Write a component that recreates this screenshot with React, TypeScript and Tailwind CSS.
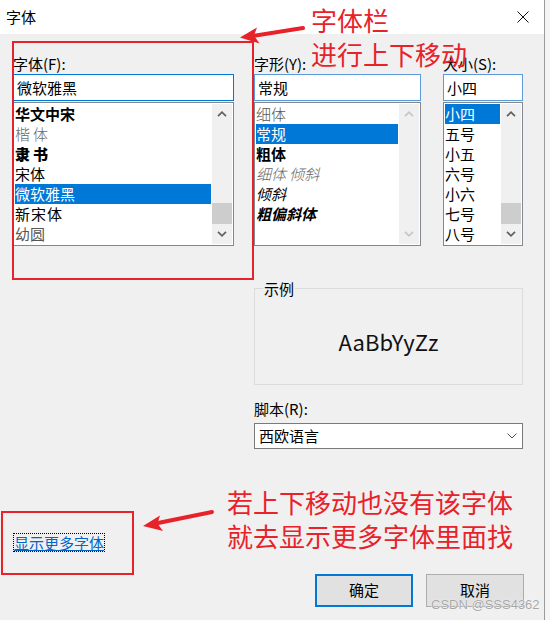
import React from "react";

const sans = "font-['Noto_Sans_CJK_SC','Noto_Sans',sans-serif]";

type Item = { label: string; cls?: string; selected?: boolean };

function Chevron({ dir, color }: { dir: "up" | "down"; color: string }) {
  return (
    <svg width="10" height="6" viewBox="0 0 10 6">
      <path
        d={dir === "up" ? "M1 5.2 L5 1.2 L9 5.2" : "M1 0.8 L5 4.8 L9 0.8"}
        fill="none"
        stroke={color}
        strokeWidth="1.7"
      />
    </svg>
  );
}

function ScrollBar({ thumb, disabled }: { thumb?: boolean; disabled?: boolean }) {
  const c = disabled ? "#c6c6c6" : "#606060";
  return (
    <div className="ml-[1px] flex w-[20px] flex-col bg-[#f0f0f0]">
      <div className="flex h-[20px] items-center justify-center">
        <Chevron dir="up" color={c} />
      </div>
      <div className="flex flex-1 flex-col justify-end">
        {thumb && <div className="h-[21px] bg-[#cdcdcd]" />}
      </div>
      <div className="flex h-[20px] items-center justify-center">
        <Chevron dir="down" color={c} />
      </div>
    </div>
  );
}

function ListBox({
  items,
  width,
  thumb,
  disabled,
}: {
  items: Item[];
  width: string;
  thumb?: boolean;
  disabled?: boolean;
}) {
  return (
    <div className={`mt-[1px] flex h-[144px] ${width} border border-[#828790] bg-white p-[1px]`}>
      <div className="flex flex-1 flex-col overflow-hidden">
        {items.map((it) => (
          <div
            key={it.label}
            className={`h-[20px] whitespace-nowrap text-[15px] leading-[20px] ${
              it.selected ? "bg-[#0078d7] text-white" : "text-black"
            } ${it.cls ?? ""}`}
          >
            {it.label}
          </div>
        ))}
      </div>
      <ScrollBar thumb={thumb} disabled={disabled} />
    </div>
  );
}

function Field({ value, width, focused }: { value: string; width: string; focused?: boolean }) {
  return (
    <div
      className={`flex h-[27px] ${width} items-center border bg-white pl-[3px] text-[15px] leading-[20px] text-black ${
        focused ? "border-[#0078d7]" : "border-[#5b9bdc]"
      }`}
    >
      {value}
    </div>
  );
}

function Label({ text }: { text: string }) {
  return <div className="h-[20px] text-[15px] leading-[20px] text-black">{text}</div>;
}

const faces: Item[] = [
  { label: "华文中宋", cls: "font-semibold" },
  { label: "楷体", cls: "!text-[#6a6a6a] tracking-[3px] font-light" },
  { label: "隶书", cls: "font-black text-[13px] tracking-[3px]" },
  { label: "宋体" },
  { label: "微软雅黑", selected: true },
  { label: "新宋体", cls: "tracking-[1px]" },
  { label: "幼圆", cls: "!text-[#555]" },
];

const styles: Item[] = [
  { label: "细体", cls: "!text-[#555] font-light" },
  { label: "常规", selected: true },
  { label: "粗体", cls: "font-bold" },
  { label: "细体 倾斜", cls: "italic !text-[#666] font-light" },
  { label: "倾斜", cls: "italic" },
  { label: "粗偏斜体", cls: "italic font-bold" },
];

const sizes: Item[] = [
  { label: "小四", selected: true },
  { label: "五号" },
  { label: "小五" },
  { label: "六号" },
  { label: "小六" },
  { label: "七号" },
  { label: "八号" },
];

export default function App() {
  return (
    <div className={`relative h-[620px] w-[550px] overflow-hidden bg-[#f5f5f5] ${sans}`}>
      <div className="flex h-[620px] w-[545px] flex-col border-r border-[#9a9a9a] bg-[#f0f0f0]">
        {/* title bar */}
        <div className="flex h-[34px] items-center justify-between bg-white pl-[6px] pr-[15px]">
          <span className="text-[15px] leading-[20px] text-black">字体</span>
          <svg width="12" height="12" viewBox="0 0 12 12">
            <path d="M0.5 0.5 L11.5 11.5 M11.5 0.5 L0.5 11.5" stroke="#111" strokeWidth="1" />
          </svg>
        </div>

        {/* dialog body */}
        <div className="flex flex-1 flex-col pl-[13px] pt-[20px]">
          <div className="flex">
            <div className="flex w-[221px] flex-col">
              <Label text="字体(F):" />
              <Field value="微软雅黑" width="w-[221px]" focused />
              <ListBox items={faces} width="w-[221px]" thumb />
            </div>
            <div className="ml-[20px] flex w-[167px] flex-col">
              <Label text="字形(Y):" />
              <Field value="常规" width="w-[167px]" />
              <ListBox items={styles} width="w-[167px]" disabled />
            </div>
            <div className="ml-[22px] flex w-[80px] flex-col">
              <Label text="大小(S):" />
              <Field value="小四" width="w-[80px]" />
              <ListBox items={sizes} width="w-[80px]" thumb />
            </div>
          </div>

          <div className="ml-[241px] w-[269px]">
            <div className="relative mt-[42px] flex h-[97px] items-center justify-center border border-[#dcdcdc] pt-[8px]">
              <span className="absolute left-[8px] top-[-10px] bg-[#f0f0f0] px-[1px] text-[15px] leading-[20px] text-black">
                示例
              </span>
              <span className="text-[22px] leading-[28px] text-[#111]">AaBbYyZz</span>
            </div>
            <div className="mt-[14px]">
              <Label text="脚本(R):" />
            </div>
            <div className="mt-[4px] flex h-[26px] items-center justify-between border border-[#7a7a7a] bg-white pl-[4px] pr-[5px] text-[15px] leading-[20px] text-black">
              <span>西欧语言</span>
              <svg width="10" height="6" viewBox="0 0 10 6">
                <path d="M0.5 0.5 L5 5 L9.5 0.5" fill="none" stroke="#555" strokeWidth="1" />
              </svg>
            </div>
          </div>

          <div className="mt-[84px] flex">
            <a className="border border-dotted border-black px-[0px] text-[15px] leading-[17px] text-[#0066cc] underline">
              显示更多字体
            </a>
          </div>

          <div className="ml-[302px] mt-[22px] flex gap-[13px]">
            <button className="flex h-[33px] w-[98px] items-center justify-center border-2 border-[#0078d7] bg-[#e1e1e1] text-[15px] text-black">
              确定
            </button>
            <button className="flex h-[33px] w-[98px] items-center justify-center border border-[#adadad] bg-[#e1e1e1] text-[15px] text-black">
              取消
            </button>
          </div>
        </div>
      </div>

      {/* red markup boxes */}
      <div className="pointer-events-none absolute left-[12px] top-[41px] h-[239px] w-[242px] border-2 border-[#e8222a]" />
      <div className="pointer-events-none absolute left-[1px] top-[511px] h-[64px] w-[133px] border-2 border-[#e8222a]" />

      {/* arrows */}
      <svg className="pointer-events-none absolute left-0 top-0" width="550" height="620" viewBox="0 0 550 620">
        <line x1="303" y1="28" x2="254" y2="35.8" stroke="#e8222a" strokeWidth="4" strokeLinecap="round" />
        <polygon points="240,37.5 257,27.5 254,35.6 259.5,43.5" fill="#e8222a" />
        <line x1="212" y1="512" x2="158" y2="523" stroke="#e8222a" strokeWidth="4" strokeLinecap="round" />
        <polygon points="143,526 160,515.5 157.5,523.4 163,531" fill="#e8222a" />
      </svg>

      {/* red notes */}
      <div className="pointer-events-none absolute left-[311px] top-[3px] text-[26px] leading-[34px] text-[#e8222a]">
        <div>字体栏</div>
        <div>进行上下移动</div>
      </div>
      <div className="pointer-events-none absolute left-[227px] top-[485px] text-[26px] leading-[34px] text-[#e8222a]">
        <div>若上下移动也没有该字体</div>
        <div>就去显示更多字体里面找</div>
      </div>

      {/* watermark */}
      <div className="pointer-events-none absolute left-[431px] top-[597px] font-['Liberation_Sans',sans-serif] text-[13px] leading-[16px] text-[#a6a6a6] [text-shadow:0_0_1px_#fff,0_0_1px_#fff]">
        CSDN @SSS4362
      </div>
    </div>
  );
}
